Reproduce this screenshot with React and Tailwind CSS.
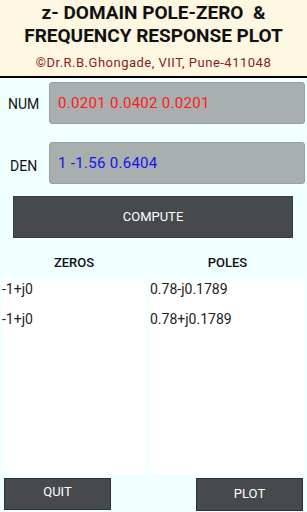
import React from 'react';

const zeros = ['-1+j0', '-1+j0'];
const poles = ['0.78-j0.1789', '0.78+j0.1789'];

export default function App() {
  return (
    <div className="w-[307px] h-[512px] bg-[#f0ffff] flex flex-col font-['Roboto',sans-serif] overflow-hidden">
      {/* header */}
      <div className="bg-[#fdf6e1] h-[78px] border-b-2 border-black flex flex-col items-center pt-[1px]">
        <div className="text-[19px] leading-[23px] font-bold text-[#111] text-center whitespace-pre">
          {'z- DOMAIN POLE-ZERO  &\nFREQUENCY RESPONSE PLOT'}
        </div>
        <div className="text-[13px] tracking-[0.5px] text-[#8b1c1c] mt-[6px]">©Dr.R.B.Ghongade, VIIT, Pune-411048</div>
      </div>

      {/* inputs */}
      <div className="flex items-center mt-[4px] h-[42px]">
        <div className="w-[49px] pl-[8px] text-[14px] text-[#111] pt-[2px]">NUM</div>
        <div className="flex-1 mr-[2px] h-[42px] bg-[#a9afaf] rounded-[3px] border border-[#9aa0a0] flex items-center pl-[8px] text-[15px] tracking-[0.3px] text-[#ff1a1a]">
          0.0201 0.0402 0.0201
        </div>
      </div>
      <div className="flex items-center mt-[18px] h-[42px]">
        <div className="w-[49px] pl-[10px] text-[14px] text-[#111] pt-[6px]">DEN</div>
        <div className="flex-1 mr-[2px] h-[42px] bg-[#a9afaf] rounded-[3px] border border-[#9aa0a0] flex items-center pl-[8px] text-[15px] tracking-[0.3px] text-[#1414ee]">
          1 -1.56 0.6404
        </div>
      </div>

      <button className="mt-[12px] ml-[13px] w-[280px] h-[42px] bg-[#464a4d] border border-[#3a3d40] text-white text-[13px]">
        COMPUTE
      </button>

      {/* results */}
      <div className="flex mt-[15px] text-[13px] text-[#111]">
        <div className="w-[148px] text-center font-medium">ZEROS</div>
        <div className="flex-1 text-center font-medium">POLES</div>
      </div>
      <div className="flex mt-[6px] h-[195px] px-[2px] gap-[4px]">
        <div className="w-[144px] bg-white flex flex-col gap-[8px]">
          {zeros.map((z, i) => (
            <div key={i} className="h-[22px] flex items-center text-[14px] text-[#222]">{z}</div>
          ))}
        </div>
        <div className="flex-1 bg-white flex flex-col gap-[8px]">
          {poles.map((p, i) => (
            <div key={i} className="h-[22px] flex items-center text-[14px] text-[#222]">{p}</div>
          ))}
        </div>
      </div>

      <div className="flex justify-between items-start mt-[4px] px-[4px]">
        <button className="w-[107px] h-[32px] bg-[#464a4d] border border-[#2e3133] text-white text-[13px] pb-[3px]">QUIT</button>
        <button className="w-[107px] h-[33px] bg-[#464a4d] border border-[#2e3133] text-white text-[13px]">PLOT</button>
      </div>
    </div>
  );
}
